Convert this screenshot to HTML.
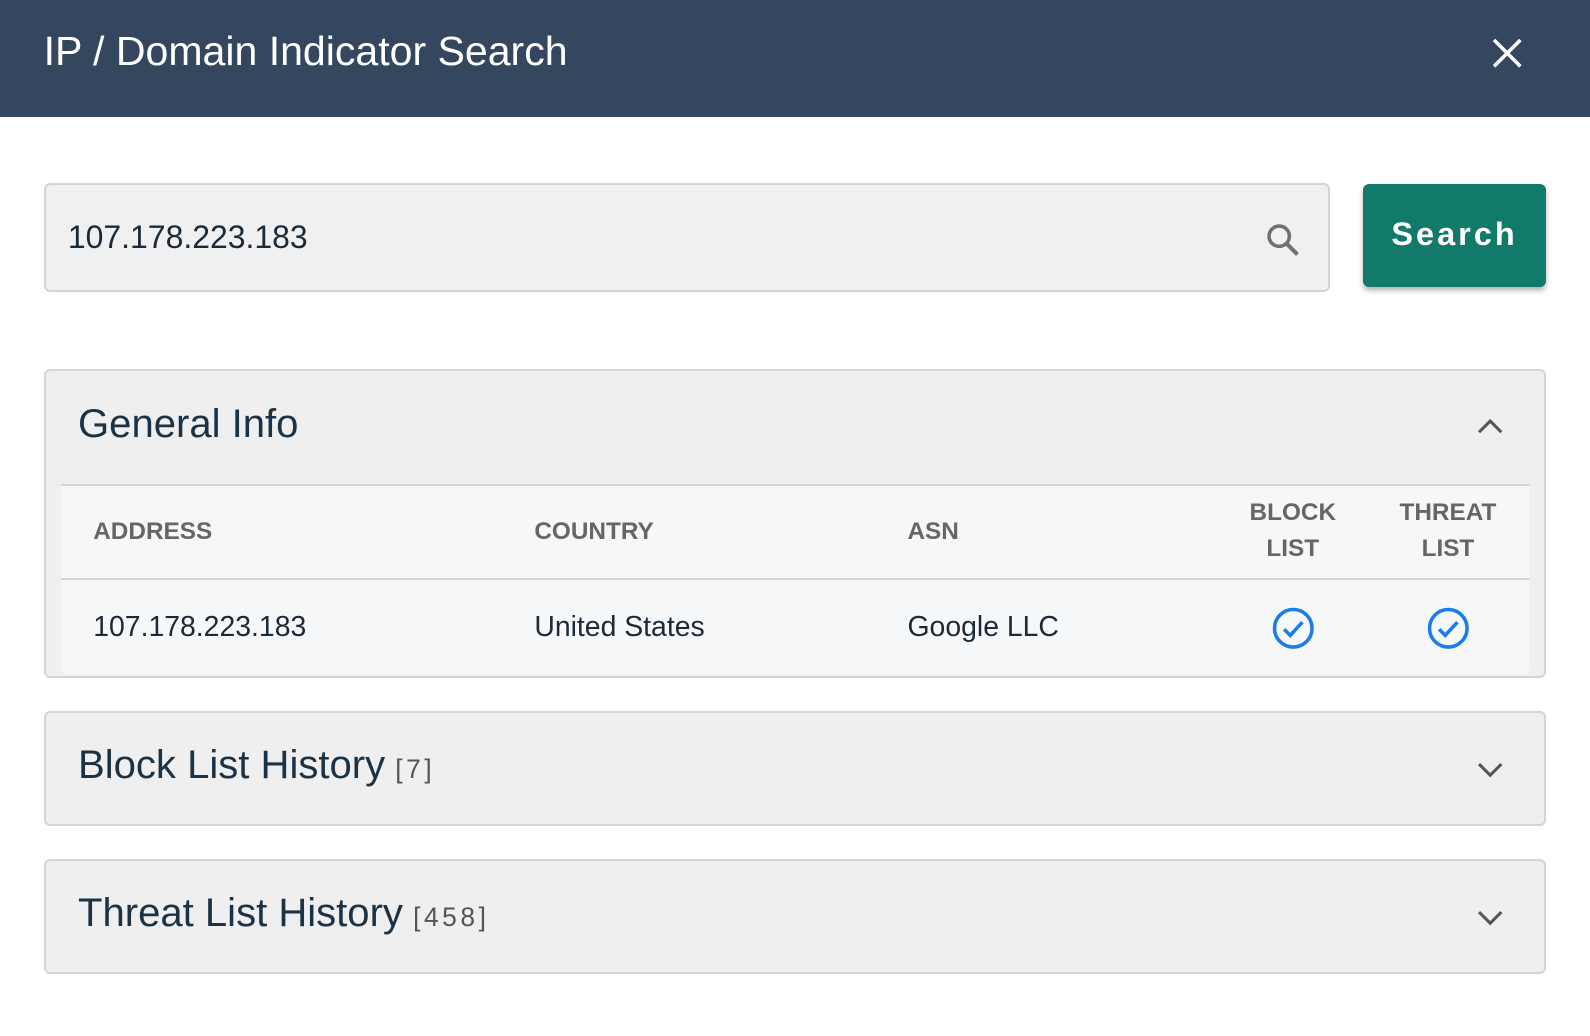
<!DOCTYPE html>
<html><head><style>
*{box-sizing:border-box;margin:0;padding:0}
body{width:1590px;height:1036px;background:#fff;font-family:"Liberation Sans",sans-serif;overflow:hidden;color:#1b3346}
.wrap{position:relative;width:1568px;height:1022px;zoom:1.014}
.hdr{position:absolute;left:0;top:0;width:1568px;height:115px;background:#34475f}
.hdr h1{position:absolute;left:43px;top:28px;font-size:40.5px;font-weight:normal;color:#fff}
.input{position:absolute;left:43px;top:180px;width:1269px;height:108px;background:#f0f0f0;border:2px solid #d3d3d3;border-radius:6px}
.input span{position:absolute;left:22px;top:34px;font-size:31.5px;color:#1b2a38}
.btn{position:absolute;left:1344px;top:181px;width:181px;height:102px;background:#127a6b;border-radius:6px;box-shadow:0 3px 5px rgba(0,0,0,.3);color:#fff;font-size:32px;font-weight:bold;letter-spacing:3px;text-align:center;line-height:100px}
.panel{position:absolute;left:43px;width:1482px;background:#efefef;border:2px solid #d5d5d5;border-radius:6px}
.panel .t{position:absolute;left:32px;font-size:39.5px;color:#1b3346}
.panel .t small{font-size:26px;color:#555;letter-spacing:3.5px;margin-left:10px}
.chev{position:absolute;left:1410px}
.inner{position:absolute;left:15px;top:111px;width:1448px;height:189px;background:#f6f7f9;border-top:2px solid #d5d5d5;border-radius:0 0 6px 6px}
.th{position:absolute;font-size:24px;font-weight:bold;color:#666;line-height:36px}
.td{position:absolute;font-size:28px;color:#1b2a38;top:124px}
</style></head><body><div class="wrap">
<div class="hdr"><h1>IP / Domain Indicator Search</h1>
<svg style="position:absolute;left:1470px;top:36px" width="32" height="32" viewBox="0 0 32 32"><path d="M3 3L29 29M29 3L3 29" stroke="#fff" stroke-width="3.5"/></svg></div>
<div class="input"><span>107.178.223.183</span>
<svg style="position:absolute;left:1202px;top:36px" width="38" height="38" viewBox="0 0 38 38"><circle cx="15" cy="15" r="10" fill="none" stroke="#707070" stroke-width="3.5"/><path d="M22 22L33 33" stroke="#707070" stroke-width="4"/></svg></div>
<div class="btn">Search</div>

<div class="panel" style="top:364px;height:305px">
<div class="t" style="top:30px">General Info</div>
<svg class="chev" style="top:44px" width="30" height="20" viewBox="0 0 30 20"><path d="M4 16L15 5L26 16" fill="none" stroke="#555" stroke-width="3"/></svg>
<div class="inner">
<div class="th" style="left:32px;top:28px">ADDRESS</div>
<div class="th" style="left:467px;top:28px">COUNTRY</div>
<div class="th" style="left:835px;top:28px">ASN</div>
<div class="th" style="left:1155px;top:9px;width:120px;text-align:center">BLOCK<br>LIST</div>
<div class="th" style="left:1303px;top:9px;width:130px;text-align:center">THREAT<br>LIST</div>
<div style="position:absolute;left:0;top:91px;width:1448px;height:2px;background:#d5d5d5"></div>
<div class="td" style="left:32px">107.178.223.183</div>
<div class="td" style="left:467px">United States</div>
<div class="td" style="left:835px">Google LLC</div>
<svg style="position:absolute;left:1194px;top:120px" width="42" height="42" viewBox="0 0 42 42"><circle cx="21" cy="21" r="18.5" fill="none" stroke="#1a7de8" stroke-width="3.5"/><path d="M12 22L18 28L30 15" fill="none" stroke="#1a7de8" stroke-width="3.5"/></svg>
<svg style="position:absolute;left:1347px;top:120px" width="42" height="42" viewBox="0 0 42 42"><circle cx="21" cy="21" r="18.5" fill="none" stroke="#1a7de8" stroke-width="3.5"/><path d="M12 22L18 28L30 15" fill="none" stroke="#1a7de8" stroke-width="3.5"/></svg>
</div></div>

<div class="panel" style="top:701px;height:114px">
<div class="t" style="top:30px">Block List History<small>[7]</small></div>
<svg class="chev" style="top:46px" width="30" height="20" viewBox="0 0 30 20"><path d="M4 5L15 16L26 5" fill="none" stroke="#555" stroke-width="3"/></svg>
</div>
<div class="panel" style="top:847px;height:114px">
<div class="t" style="top:30px">Threat List History<small>[458]</small></div>
<svg class="chev" style="top:46px" width="30" height="20" viewBox="0 0 30 20"><path d="M4 5L15 16L26 5" fill="none" stroke="#555" stroke-width="3"/></svg>
</div>
</div></body></html>
